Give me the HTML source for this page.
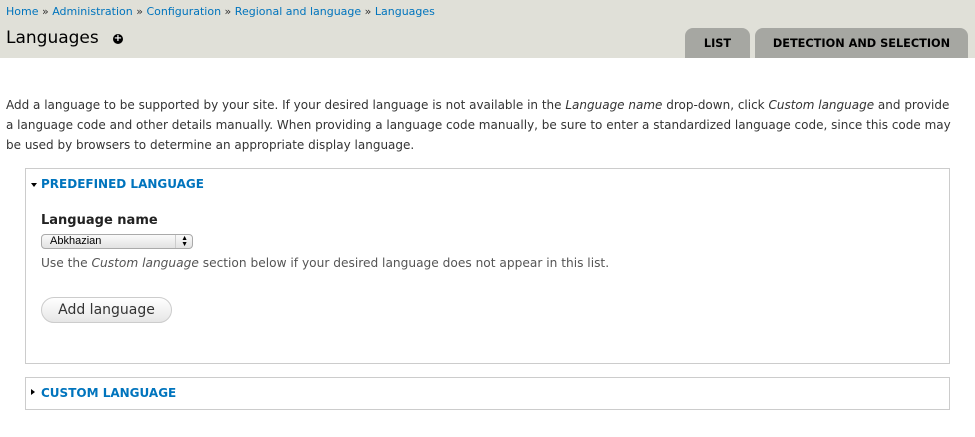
<!DOCTYPE html>
<html><head><style>
*{box-sizing:border-box}
body{margin:0;width:975px;height:437px;background:#fff;font-family:"DejaVu Sans","Liberation Sans",sans-serif;font-size:12px;color:#333;position:relative;overflow:hidden}
a{color:#0074bd;text-decoration:none}
#hd{position:absolute;left:0;top:0;width:975px;height:58px;background:#e0e0d8}
.bc{position:absolute;left:6px;top:5px;font-size:11px;color:#333}
h1{position:absolute;left:6px;top:28px;margin:0;font-weight:normal;font-size:17px;color:#000;font-family:"DejaVu Sans",sans-serif}
.plus{position:absolute;left:113px;top:34px;width:10px;height:10px;border-radius:50%;background:#000;color:#fff;font-size:10px;line-height:10px;text-align:center;font-weight:bold}
.tab{position:absolute;top:28px;height:30px;background:#a6a7a2;border-radius:8px 8px 0 0;font-weight:bold;font-size:11.3px;color:#000;text-align:center;line-height:32px}
p.d{position:absolute;left:6px;top:95px;margin:0;width:950px;line-height:20px;font-size:12px}
.fs{position:absolute;left:25px;width:925px;border:1px solid #ccc}
.lg{color:#0074bd;font-weight:bold;font-size:12px;position:absolute;left:15px}
.tri{position:absolute;left:5px;width:0;height:0}
</style></head><body>
<div id="hd">
<div class="bc"><a>Home</a> » <a>Administration</a> » <a>Configuration</a> » <a>Regional and language</a> » <a>Languages</a></div>
<h1>Languages</h1><div class="plus">+</div>
<div class="tab" style="left:685px;width:65px">LIST</div>
<div class="tab" style="left:755px;width:213px">DETECTION AND SELECTION</div>
</div>
<p class="d">Add a language to be supported by your site. If your desired language is not available in the <i>Language name</i> drop-down, click <i>Custom language</i> and provide a language code and other details manually. When providing a language code manually, be sure to enter a standardized language code, since this code may be used by browsers to determine an appropriate display language.</p>
<div class="fs" style="top:168px;height:196px">
<div class="tri" style="top:14px;border-left:3px solid transparent;border-right:3px solid transparent;border-top:4px solid #000"></div>
<div class="lg" style="top:8px">PREDEFINED LANGUAGE</div>
<div style="position:absolute;left:15px;top:44px;font-weight:bold;color:#222;font-size:13px">Language name</div>
<div style="position:absolute;left:15px;top:65px;width:152px;height:15px;border:1px solid #aaa;border-radius:4px;background:linear-gradient(#fafafa,#e2e2e2);font-family:'Liberation Sans',sans-serif;font-size:11px;color:#000;padding-left:8px;line-height:13px">Abkhazian<span style="position:absolute;right:4px;font-size:7px;line-height:6px;top:1px">▲<br>▼</span><span style="position:absolute;right:16px;top:0;height:13px;border-left:1px solid #ccc"></span></div>
<div style="position:absolute;left:15px;top:87px;font-size:12.2px;color:#555">Use the <i>Custom language</i> section below if your desired language does not appear in this list.</div>
<div style="position:absolute;left:15px;top:128px;width:131px;height:26px;border:1px solid #ccc;border-radius:13px;background:linear-gradient(#fff,#e6e6e6);font-size:14px;color:#333;text-align:center;line-height:24px">Add language</div>
</div>
<div class="fs" style="top:377px;height:33px">
<div class="tri" style="top:11px;border-top:3px solid transparent;border-bottom:3px solid transparent;border-left:4px solid #000"></div>
<div class="lg" style="top:8px">CUSTOM LANGUAGE</div>
</div>
</body></html>
